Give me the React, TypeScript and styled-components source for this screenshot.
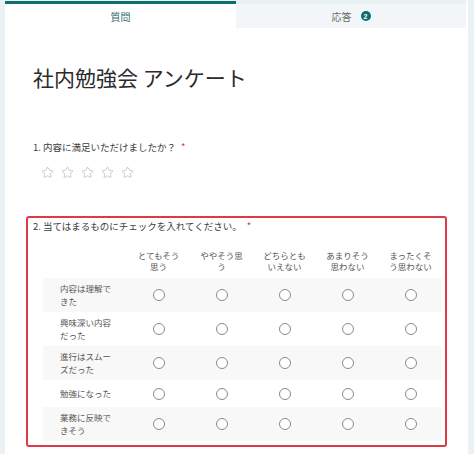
import React from 'react';
import styled, {createGlobalStyle} from "styled-components";
import {Star} from "lucide-react";

const GlobalStyle = createGlobalStyle`
    body {
        margin: 0;
        background-color: #eaf2f4;
        font-family: "Noto Sans CJK JP", "Noto Sans", sans-serif;
    }
`

const columns = ["とてもそう\n思う", "ややそう思\nう", "どちらとも\nいえない", "あまりそう\n思わない", "まったくそ\nう思わない"]
const statements = ["内容は理解で\nきた", "興味深い内容\nだった", "進行はスムー\nズだった", "勉強になった", "業務に反映で\nきそう"]

export default function App() {
    return (
        <Page>
            <GlobalStyle/>
            <Card>
                <Tabs>
                    <Tab $active>質問</Tab>
                    <Tab>応答<Badge>2</Badge></Tab>
                </Tabs>
                <Content>
                    <Title>社内勉強会 アンケート</Title>
                    <Question>
                        <QuestionText>1. 内容に満足いただけましたか？<Required>*</Required></QuestionText>
                        <Stars>
                            {[0, 1, 2, 3, 4].map(i => <Star key={i} size={13} strokeWidth={1.2} color="#b0b0b0"/>)}
                        </Stars>
                    </Question>
                    <Question $selected>
                        <QuestionText>2. 当てはまるものにチェックを入れてください。<Required>*</Required></QuestionText>
                        <Likert>
                            <HeaderCell/>
                            {columns.map(c => <HeaderCell key={c}>{c}</HeaderCell>)}
                            {statements.map((s, i) => (
                                <React.Fragment key={s}>
                                    <RowLabel $shaded={i % 2 === 0}>{s}</RowLabel>
                                    {columns.map(c => (
                                        <RadioCell key={c} $shaded={i % 2 === 0}><Radio/></RadioCell>
                                    ))}
                                </React.Fragment>
                            ))}
                        </Likert>
                    </Question>
                </Content>
            </Card>
        </Page>
    );
}

const Page = styled.div`
    padding: 1px 6px 0 5px;
`

const Card = styled.div`
    background-color: #fff;
    min-height: 453px;
`

const Tabs = styled.div`
    display: grid;
    grid-template-columns: 231px 1fr;
    margin-right: 2px;
`

const Tab = styled.div<{ $active?: boolean }>`
    height: 24px;
    border-top: 3px solid ${p => p.$active ? "#0f6f6f" : "#eaf1f3"};
    background-color: ${p => p.$active ? "#fff" : "#f3f6f8"};
    color: ${p => p.$active ? "#336b6c" : "#6a6a6a"};
    font-size: 10px;
    display: flex;
    align-items: center;
    justify-content: center;
    gap: 9px;
`

const Badge = styled.span`
    width: 10px;
    height: 10px;
    border-radius: 50%;
    background-color: #0d6a6e;
    color: #fff;
    font-size: 7px;
    font-weight: bold;
    display: flex;
    align-items: center;
    justify-content: center;
    font-family: "Liberation Sans", sans-serif;
`

const Content = styled.div`
    padding: 34px 21px 0;
`

const Title = styled.h1`
    margin: 0 0 48px 7px;
    font-size: 21px;
    font-weight: normal;
    line-height: 30px;
    color: #2b2b2b;
`

const Question = styled.div<{ $selected?: boolean }>`
    padding: ${p => p.$selected ? "1px 5px 4px" : "0 7px"};
    border: ${p => p.$selected ? "2px solid #dc3b46" : "none"};
    border-radius: 3px;
    margin-bottom: ${p => p.$selected ? "0" : "37px"};
`

const QuestionText = styled.div`
    font-size: 9.5px;
    line-height: 14px;
    color: #3c3c3c;
`

const Required = styled.span`
    color: #d0343f;
    margin-left: 5px;
`

const Stars = styled.div`
    display: flex;
    gap: 7px;
    margin: 12px 0 0 8px;
`

const Likert = styled.div`
    display: grid;
    grid-template-columns: 84px repeat(5, 63px);
    margin: 17px 0 0 10px;
`

const HeaderCell = styled.div`
    white-space: pre-line;
    text-align: center;
    font-size: 8.5px;
    line-height: 11px;
    color: #555;
    margin-bottom: 6px;
`

const RowLabel = styled.div<{ $shaded: boolean }>`
    white-space: pre-line;
    font-size: 8.5px;
    line-height: 13px;
    color: #555;
    padding: 4px 0 4px 17px;
    min-height: 27px;
    box-sizing: border-box;
    display: flex;
    align-items: center;
    background-color: ${p => p.$shaded ? "#f8f8f8" : "#fff"};
`

const RadioCell = styled.div<{ $shaded: boolean }>`
    display: flex;
    align-items: center;
    justify-content: center;
    background-color: ${p => p.$shaded ? "#f8f8f8" : "#fff"};
`

const Radio = styled.span`
    width: 10px;
    height: 10px;
    border: 1px solid #8a8a8a;
    border-radius: 50%;
    background-color: #fff;
`
